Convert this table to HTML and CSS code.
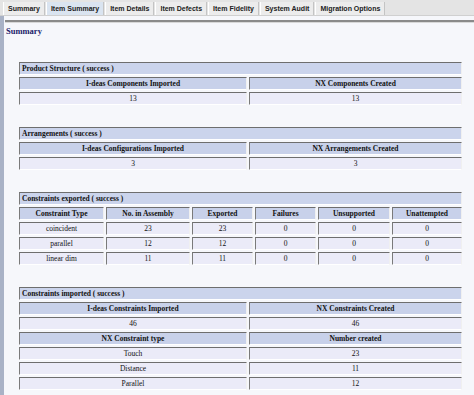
FILE: index.html
```html
<!DOCTYPE html>
<html lang="en">
<head>
    <meta charset="UTF-8">
    <title>Item Summary</title>
    <link rel="stylesheet" href="styles.css">
</head>
<body>

    <div class="tabs">
        <span class="tab">Summary</span>
        <span class="tab active">Item Summary</span>
        <span class="tab">Item Details</span>
        <span class="tab">Item Defects</span>
        <span class="tab">Item Fidelity</span>
        <span class="tab">System Audit</span>
        <span class="tab">Migration Options</span>
    </div>

    <div class="panel">
        <h1 class="heading">Summary</h1>

        <table class="report">
            <colgroup><col class="c-left"><col></colgroup>
            <tr><td class="caption" colspan="2">Product Structure ( success )</td></tr>
            <tr><th>I-deas Components Imported</th><th>NX Components Created</th></tr>
            <tr><td>13</td><td>13</td></tr>
        </table>

        <table class="report">
            <colgroup><col class="c-left"><col></colgroup>
            <tr><td class="caption" colspan="2">Arrangements ( success )</td></tr>
            <tr><th>I-deas Configurations Imported</th><th>NX Arrangements Created</th></tr>
            <tr><td>3</td><td>3</td></tr>
        </table>

        <table class="report">
            <colgroup>
                <col class="c-type"><col class="c-num"><col class="c-small"><col class="c-small"><col class="c-mid"><col>
            </colgroup>
            <tr><td class="caption" colspan="6">Constraints exported ( success )</td></tr>
            <tr>
                <th>Constraint Type</th><th>No. in Assembly</th><th>Exported</th>
                <th>Failures</th><th>Unsupported</th><th>Unattempted</th>
            </tr>
            <tr><td>coincident</td><td>23</td><td>23</td><td>0</td><td>0</td><td>0</td></tr>
            <tr><td>parallel</td><td>12</td><td>12</td><td>0</td><td>0</td><td>0</td></tr>
            <tr><td>linear dim</td><td>11</td><td>11</td><td>0</td><td>0</td><td>0</td></tr>
        </table>

        <table class="report compact">
            <colgroup><col class="c-left"><col></colgroup>
            <tr><td class="caption" colspan="2">Constraints imported ( success )</td></tr>
            <tr><th>I-deas Constraints Imported</th><th>NX Constraints Created</th></tr>
            <tr><td>46</td><td>46</td></tr>
            <tr><th>NX Constraint type</th><th>Number created</th></tr>
            <tr><td>Touch</td><td>23</td></tr>
            <tr><td>Distance</td><td>11</td></tr>
            <tr><td>Parallel</td><td>12</td></tr>
        </table>
    </div>

</body>
</html>
```

FILE: styles.css
```css
body {
    margin: 0;
    padding: 0;
    background: #f6f7fb;
    font-family: "Liberation Serif", "Times New Roman", serif;
    overflow: hidden;
}

/* Tab strip */
.tabs {
    display: flex;
    gap: 1px;
    padding: 2px 0 0 3px;
    height: 13px;
    background: #e4e4e4;
    border-bottom: 1px solid #d0d0d0;
}

.tab {
    padding: 1px 4px 0 4px;
    font-family: "Liberation Sans", Arial, sans-serif;
    font-size: 7px;
    font-weight: bold;
    color: #222;
    background: #ececec;
    border-left: 1px solid #ffffff;
    border-right: 1px solid #c4c4c4;
    line-height: 11px;
}

.tab.active {
    background: #dae4f0;
}

/* Content panel */
.panel {
    border-left: 4px solid #a9b2c6;
    padding: 4px 10px 20px 13px;
}

.panel::before {
    content: "";
    display: block;
    height: 2px;
    margin-left: -12px;
    margin-right: -10px;
    background: #8a8a8a;
    border-bottom: 1px solid #d8d8d8;
}

.heading {
    margin: 2px 0 0 -11px;
    font-size: 8.5px;
    font-weight: bold;
    color: #22226a;
    line-height: 12px;
}

/* Report tables */
.report {
    width: 447px;
    margin: 23px 0 0 0;
    border-spacing: 2px;
    border-collapse: separate;
    table-layout: fixed;
    font-size: 7.5px;
}

.report + .report {
    margin-top: 18px;
}

.report td,
.report th {
    box-sizing: border-box;
    height: 13px;
    padding: 0 2px;
    line-height: 11px;
    text-align: center;
    color: #111;
    border-top: 1px solid #6e6e6e;
    border-left: 1px solid #7a7a7a;
    border-bottom: 1px solid #ffffff;
    border-right: 1px solid #f0f0f0;
    background: #ebebf8;
    font-weight: normal;
    white-space: nowrap;
    overflow: hidden;
}

.report.compact td,
.report.compact th {
    height: 12.7px;
}

.report th {
    background: #c8d1ea;
    font-weight: bold;
}

.report .caption {
    text-align: left;
    font-weight: bold;
    background: #cbd4ec;
}

.c-left { width: 228px; }
.c-type { width: 85px; }
.c-num { width: 84px; }
.c-small { width: 61px; }
.c-mid { width: 72px; }
```
